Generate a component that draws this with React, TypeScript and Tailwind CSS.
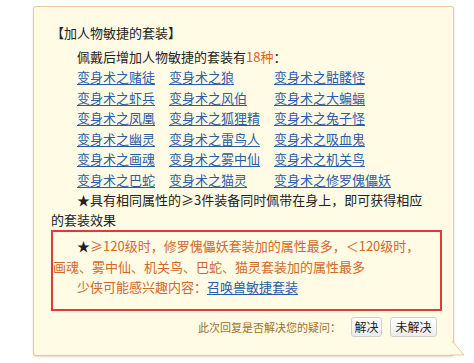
import React from "react";

const linkCls = "text-[#2a5caa] underline underline-offset-[2px] decoration-1";

const rows: [string, string, string][] = [
  ["变身术之赌徒", "变身术之狼", "变身术之骷髅怪"],
  ["变身术之虾兵", "变身术之风伯", "变身术之大蝙蝠"],
  ["变身术之凤凰", "变身术之狐狸精", "变身术之兔子怪"],
  ["变身术之幽灵", "变身术之雷鸟人", "变身术之吸血鬼"],
  ["变身术之画魂", "变身术之雾中仙", "变身术之机关鸟"],
  ["变身术之巴蛇", "变身术之猫灵", "变身术之修罗傀儡妖"],
];

export default function App() {
  return (
    <div
      className="w-[474px] h-[363px] bg-white overflow-hidden pt-[6px] pl-[33px]"
      style={{ fontFamily: '"Noto Sans CJK SC", "Noto Sans", sans-serif' }}
    >
      <div className="relative w-[421px] h-[350px] bg-[#fffbe5] border border-[#e9c998] rounded-[3px] shadow-[0_1px_2px_rgba(180,140,80,0.35)] pl-[17px] pr-[16px] pt-[16px] text-[13px] leading-[20.5px] text-[#222]">
        <div className="mb-[3px]">【加人物敏捷的套装】</div>
        <div className="pl-[26px]">
          <div>
            佩戴后增加人物敏捷的套装有<span className="text-[#e0641e]">18种</span>：
          </div>
          {rows.map((r, i) => (
            <div key={i} className="flex">
              <span className="w-[92px]"><span className={linkCls}>{r[0]}</span></span>
              <span className="w-[105px]"><span className={linkCls}>{r[1]}</span></span>
              <span><span className={linkCls}>{r[2]}</span></span>
            </div>
          ))}
        </div>
        <div className="leading-[19.5px] indent-[26px] w-[382px]">
          ★具有相同属性的≥3件装备同时佩带在身上，即可获得相应的套装效果
        </div>
        <div className="mt-[1px] w-[391px] border-2 border-[#e03a3a] pt-[4px] pb-[11px] text-[#d0692a] leading-[20.5px]">
          <div className="pl-[24px]">
            <span className="text-[#222]">★</span>
            <span>≥120级时，修罗傀儡妖套装加的属性最多，＜120级时，</span>
          </div>
          <div>画魂、雾中仙、机关鸟、巴蛇、猫灵套装加的属性最多</div>
          <div className="pl-[24px]">
            少侠可能感兴趣内容：<span className={linkCls}>召唤兽敏捷套装</span>
          </div>
        </div>
        <div className="mt-[6px] flex items-center justify-end gap-[8px] w-[386px]">
          <span className="text-[11px] text-[#a0702a] mr-[2px]">此次回复是否解决您的疑问：</span>
          <button className="h-[20px] w-[31px] rounded-[3px] border border-[#cfcfcf] bg-gradient-to-b from-white to-[#ececec] text-[12px] leading-[18px] text-[#222]">
            解决
          </button>
          <button className="h-[20px] w-[47px] rounded-[3px] border border-[#cfcfcf] bg-gradient-to-b from-white to-[#ececec] text-[12px] leading-[18px] text-[#222]">
            未解决
          </button>
        </div>
        <svg
          className="absolute right-[-13px] bottom-[-2px]"
          width="16"
          height="18"
          viewBox="0 0 16 18"
        >
          <polygon points="0,0 14,16 0,16" fill="#fffbe5" />
          <polyline points="2,2 14,16 0,16" fill="none" stroke="#e9c998" strokeWidth="1" />
        </svg>
      </div>
    </div>
  );
}
